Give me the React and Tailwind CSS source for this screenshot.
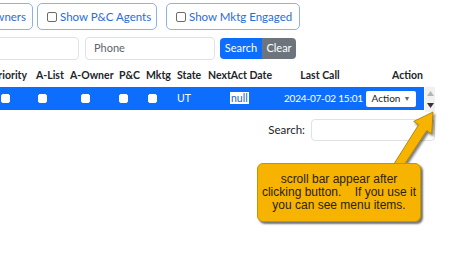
import React from "react";

const FONT = { fontFamily: 'Lato, "Noto Sans", sans-serif' };

/* -------- SMALL CHECKBOX -------- */
const Box = ({ className = "" }) => (
  <span className={`inline-block shrink-0 w-[9px] h-[9px] border border-[#6b6b6b] rounded-[2px] bg-white align-middle ${className}`} />
);

const FilterButton = ({ label, width, align = "justify-start" }) => (
  <button
    className={`${width} ${align} h-[27px] shrink-0 flex items-center gap-[3px] px-[9px] border border-[#8eb0ee] rounded-[5px] text-[11.5px] text-[#2a6bd8] bg-white`}
  >
    <Box className="w-[10px] h-[10px]" />
    <span className="whitespace-nowrap">{label}</span>
  </button>
);

const HEAD = [
  { label: "Priority", w: "w-[120px]", cls: "text-right pr-[6px]" },
  { label: "A-List", w: "w-[34px]", cls: "pl-[3px]" },
  { label: "A-Owner", w: "w-[49px]", cls: "pl-[3px]" },
  { label: "P&C", w: "w-[27px]", cls: "pl-[3px]" },
  { label: "Mktg", w: "w-[31px]", cls: "pl-[3px]" },
  { label: "State", w: "w-[31px]", cls: "pl-[3px]" },
  { label: "NextAct Date", w: "w-[75px]", cls: "pl-[3px]" },
  { label: "Last Call", w: "w-[80px]", cls: "text-center" },
  { label: "Action", w: "w-[64px]", cls: "text-right pr-[1px]" },
];

export default function App() {
  return (
    <div className="relative w-[474px] h-[262px] overflow-hidden bg-white text-[#212529]" style={FONT}>
      {/* ---------- FILTER BUTTONS ---------- */}
      <div className="flex gap-[4px] pt-[3px] -ml-[87px]">
        <FilterButton label="Show A-Owners" width="w-[120px]" align="justify-end pr-[6px]" />
        <FilterButton label="Show P&C Agents" width="w-[120px]" />
        <div className="w-[1px]" />
        <FilterButton label="Show Mktg Engaged" width="w-[134px]" />
      </div>

      {/* ---------- SEARCH ROW ---------- */}
      <div className="flex items-center mt-[7px] -ml-[41px]">
        <div className="w-[120px] h-[23px] border border-[#dee2e6] rounded-[4px]" />
        <div className="w-[130px] h-[23px] ml-[6px] border border-[#dee2e6] rounded-[4px] flex items-center px-[8px] text-[11px] text-[#5c636a]">
          Phone
        </div>
        <button className="ml-[5px] h-[21px] w-[42px] bg-[#0d6efd] text-white text-[11px] rounded-l-[4px]">Search</button>
        <button className="h-[21px] w-[34px] bg-[#6c757d] text-white text-[11px] rounded-r-[4px]">Clear</button>
      </div>

      {/* ---------- TABLE ---------- */}
      <div className="-ml-[87px] mt-[6px]">
        <div className="flex h-[20px] items-center text-[10.5px] font-bold whitespace-nowrap">
          {HEAD.map((h) => (
            <div key={h.label} className={`${h.w} ${h.cls}`}>{h.label}</div>
          ))}
        </div>
        <div className="flex items-start mt-[1px]">
          <div className="flex h-[23px] items-center bg-[#0d6efd] text-white text-[10.5px] whitespace-nowrap">
            <div className="w-[120px] pl-[88px] flex"><Box className="border-white" /></div>
            <div className="w-[34px] pl-[5px] flex"><Box className="border-white" /></div>
            <div className="w-[49px] pl-[14px] flex"><Box className="border-white" /></div>
            <div className="w-[27px] pl-[3px] flex"><Box className="border-white" /></div>
            <div className="w-[31px] pl-[5px] flex"><Box className="border-white" /></div>
            <div className="w-[31px] pl-[3px]">UT</div>
            <div className="w-[75px] pl-[25px]">
              <span className="bg-white text-[#1d5fd0] px-[1px]">null</span>
            </div>
            <div className="w-[86px] pl-[4px] text-[10px] tracking-[-0.2px]">2024-07-02 15:01</div>
            <div className="w-[58px]">
              <button className="h-[16px] w-[50px] bg-white text-[#222] text-[10px] rounded-[2px] flex items-center justify-center gap-[3px]">
                Action <span className="text-[7px] text-[#666]">▼</span>
              </button>
            </div>
          </div>
          {/* scroll bar */}
          <div className="w-[10px] h-[25px] ml-[1px] bg-[#f1f1f1] flex flex-col items-center justify-between py-[4px]">
            <svg width="7" height="5" viewBox="0 0 7 5"><path d="M0 5 L3.5 0 L7 5 Z" fill="#b5b5b5" /></svg>
            <svg width="7" height="5" viewBox="0 0 7 5"><path d="M0 0 L3.5 5 L7 0 Z" fill="#333" /></svg>
          </div>
        </div>
      </div>

      {/* ---------- TABLE SEARCH ---------- */}
      <div className="flex items-center justify-end pr-[39px] mt-[7px] text-[11.5px]">
        <span className="text-[#212529]">Search:</span>
        <div className="ml-[6px] w-[124px] h-[22px] border border-[#dee2e6] rounded-[4px]" />
      </div>

      {/* ---------- CALLOUT ---------- */}
      <svg className="absolute left-0 top-0" width="474" height="262">
        <defs>
          <filter id="sh" x="-20%" y="-20%" width="140%" height="140%">
            <feDropShadow dx="1.5" dy="2" stdDeviation="1" floodColor="#000" floodOpacity="0.55" />
          </filter>
        </defs>
        <polygon
          points="393.9,164 418.6,124.8 413.7,121.4 433,112 431.7,134 426.8,130.6 402.1,168"
          fill="#f6b400"
          stroke="#a07800"
          strokeWidth="0.8"
          filter="url(#sh)"
        />
      </svg>
      <div
        className="absolute left-[257px] top-[163px] w-[164px] h-[59px] bg-[#f6b400] rounded-[6px] border border-[#c99200] shadow-[2px_2px_2px_rgba(0,0,0,0.55)] flex flex-col items-center justify-center text-[12px] leading-[13px] text-[#2b2200] text-center"
        style={{ fontFamily: '"Liberation Sans", Arial, sans-serif' }}
      >
        <div>scroll bar appear after</div>
        <div className="whitespace-pre">clicking button.    If you use it</div>
        <div>you can see menu items.</div>
      </div>
    </div>
  );
}
